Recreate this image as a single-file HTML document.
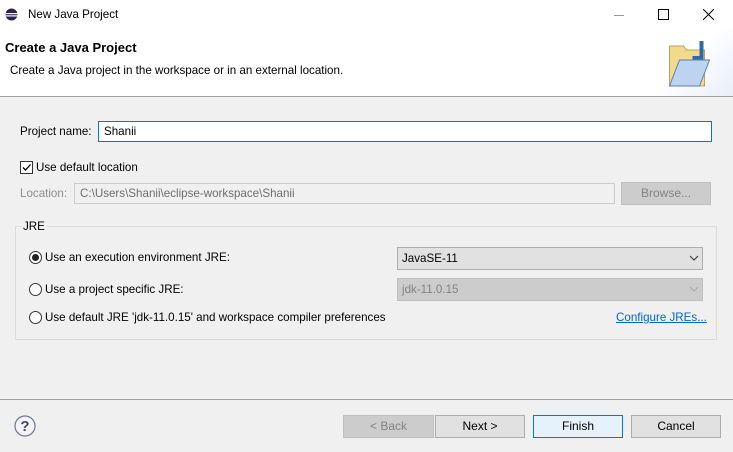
<!DOCTYPE html>
<html><head><meta charset="utf-8"><style>
*{margin:0;padding:0;box-sizing:border-box}
body{width:733px;height:452px;background:#f0f0f0;font-family:"Liberation Sans",sans-serif;font-size:11.6px;color:#000;position:relative;overflow:hidden}
.a{position:absolute;white-space:nowrap}
.hdr{position:absolute;left:0;top:0;width:733px;height:96px;background:#fff}
.btn{position:absolute;height:23px;border:1px solid #adadad;background:#e1e1e1;text-align:center;line-height:21px;font-size:12px}
.radio{position:absolute;width:13px;height:13px;border:1px solid #333;border-radius:50%;background:#fff}
</style></head><body>
<div class="hdr"></div>
<div class="a" style="right:0;top:30px;width:70px;height:66px;background:linear-gradient(135deg,#fff 40%,#e8eef8)"></div>
<svg class="a" style="left:5px;top:8px" width="13" height="13" viewBox="0 0 13 13"><circle cx="6.5" cy="6.5" r="6" fill="#2c2255"/><rect x="0" y="5" width="13" height="1.2" fill="#fff"/><rect x="0" y="7.3" width="13" height="1.2" fill="#fff"/></svg>
<div class="a" style="left:28px;top:8px">New Java Project</div>
<div class="a" style="left:614px;top:15px;width:10px;height:1px;background:#999"></div>
<div class="a" style="left:658px;top:9px;width:11px;height:11px;border:1px solid #000"></div>
<svg class="a" style="left:703px;top:9px" width="11" height="11"><path d="M0 0L11 11M11 0L0 11" stroke="#000" stroke-width="1"/></svg>
<div class="a" style="left:5px;top:40px;font-weight:bold;font-size:13px">Create a Java Project</div>
<div class="a" style="left:10px;top:64px">Create a Java project in the workspace or in an external location.</div>
<svg class="a" style="left:665px;top:38px" width="46" height="52" viewBox="0 0 45 52"><path d="M4 8h14l3 4h18v36H4z" fill="#f3d98c" stroke="#b9a260"/><path d="M36 3v17h-9" stroke="#2f6aa8" stroke-width="4" fill="none"/><path d="M14 22h30l-10 26H4z" fill="#bcd3f2" stroke="#5c7eb0"/></svg>
<div class="a" style="left:0;top:96px;width:733px;height:1px;background:#a0a0a0"></div>

<div class="a" style="left:20px;top:125px">Project name:</div>
<div class="a" style="left:98px;top:121px;width:614px;height:21px;border:1px solid #0078d7;background:#fff;padding:3px 5px">Shanii</div>

<div class="a" style="left:20px;top:161px;width:13px;height:13px;border:1px solid #333;background:#fff"></div>
<svg class="a" style="left:21px;top:162px" width="11" height="11"><path d="M2 5.5L4.5 8L9.5 2.5" stroke="#000" stroke-width="1.3" fill="none"/></svg>
<div class="a" style="left:36px;top:161px">Use default location</div>

<div class="a" style="left:20px;top:187px;color:#8d8d8d">Location:</div>
<div class="a" style="left:74px;top:183px;width:541px;height:21px;border:1px solid #ccc;background:#f0f0f0;padding:3px 5px;color:#6d6d6d">C:\Users\Shanii\eclipse-workspace\Shanii</div>
<div class="btn" style="left:621px;top:182px;width:90px;background:#ccc;border-color:#bfbfbf;color:#838383">Browse...</div>

<div class="a" style="left:15px;top:226px;width:702px;height:114px;border:1px solid #dcdcdc"></div>
<div class="a" style="left:21px;top:220px;background:#f0f0f0;padding:0 2px">JRE</div>

<div class="radio" style="left:29px;top:251px"></div><div class="a" style="left:32px;top:254px;width:7px;height:7px;border-radius:50%;background:#222"></div>
<div class="a" style="left:45px;top:251px">Use an execution environment JRE:</div>
<div class="radio" style="left:29px;top:283px"></div>
<div class="a" style="left:45px;top:283px">Use a project specific JRE:</div>
<div class="radio" style="left:29px;top:311px"></div>
<div class="a" style="left:45px;top:311px">Use default JRE 'jdk-11.0.15' and workspace compiler preferences</div>

<div class="a" style="left:397px;top:247px;width:306px;height:23px;border:1px solid #adadad;background:#e1e1e1;padding:4px 4px">JavaSE-11</div>
<svg class="a" style="left:689px;top:255px" width="10" height="6"><path d="M1 1L5 5L9 1" stroke="#333" fill="none"/></svg>
<div class="a" style="left:397px;top:278px;width:306px;height:23px;border:1px solid #bfbfbf;background:#ccc;padding:4px 4px;color:#838383">jdk-11.0.15</div>
<svg class="a" style="left:689px;top:286px" width="10" height="6"><path d="M1 1L5 5L9 1" stroke="#aaa" fill="none"/></svg>
<div class="a" style="left:616px;top:311px;color:#0066cc;text-decoration:underline">Configure JREs...</div>

<div class="a" style="left:0;top:399px;width:733px;height:1px;background:#a0a0a0"></div>

<svg class="a" style="left:14px;top:415px" width="22" height="22" viewBox="0 0 22 22"><circle cx="11" cy="11" r="10" fill="#f4f4f8" stroke="#6a7590" stroke-width="1.2"/><text x="11" y="16" text-anchor="middle" font-family="Liberation Sans" font-weight="bold" font-size="15" fill="#3d4a6a">?</text></svg>

<div class="btn" style="left:343px;top:415px;width:91px;background:#ccc;border-color:#bfbfbf;color:#838383">&lt; Back</div>
<div class="btn" style="left:435px;top:415px;width:90px">Next &gt;</div>
<div class="btn" style="left:533px;top:415px;width:90px;background:#e5f1fb;border-color:#0078d7">Finish</div>
<div class="btn" style="left:631px;top:415px;width:90px">Cancel</div>
</body></html>
